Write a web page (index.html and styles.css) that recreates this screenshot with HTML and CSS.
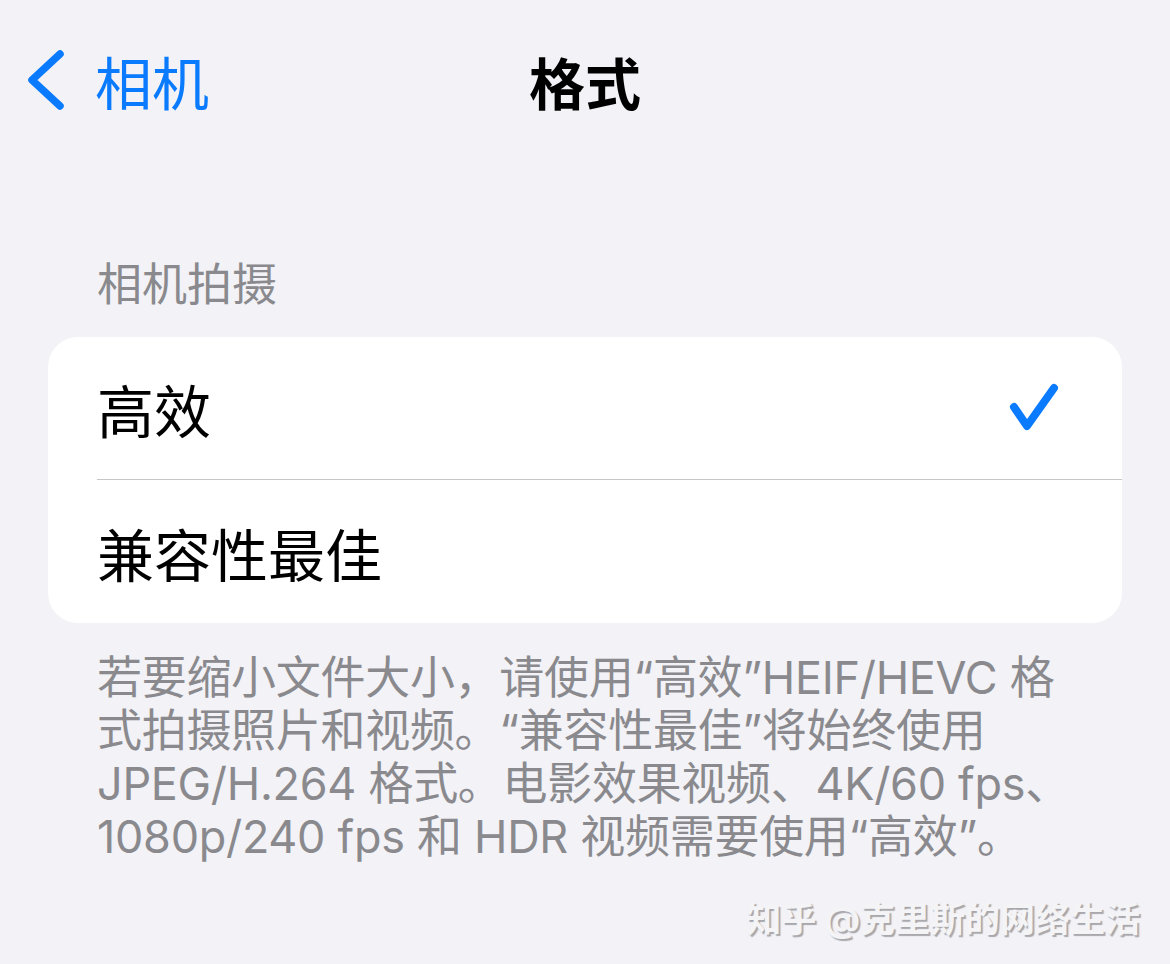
FILE: index.html
```html
<!DOCTYPE html>
<html lang="zh-CN">
  <head>
    <meta charset="UTF-8" />
    <meta name="viewport" content="width=device-width, initial-scale=1.0" />
    <title>格式</title>
    <link rel="stylesheet" href="styles.css">
  </head>
  <body>
    <div class="nav">
      <a class="back" href="#">
        <svg class="chevron" width="40" height="64" viewBox="0 0 40 64">
          <path d="M34 6 L6 32 L34 58" fill="none" stroke="#0a7aff" stroke-width="7.5" stroke-linecap="round" stroke-linejoin="round" />
        </svg>
        <span>相机</span>
      </a>
      <h1 class="title">格式</h1>
      <div></div>
    </div>

    <p class="section-header">相机拍摄</p>
    <div class="card">
      <div class="row">
        <span>高效</span>
        <svg class="check" width="52" height="52" viewBox="0 0 52 52">
          <path d="M6 25 L19 44 L46 6" fill="none" stroke="#0a7aff" stroke-width="8" stroke-linecap="round" stroke-linejoin="round" />
        </svg>
      </div>
      <div class="row">
        <span>兼容性最佳</span>
      </div>
    </div>
    <p class="footer">
      若要缩小文件大小，请使用“高效”HEIF/HEVC 格<br />式拍摄照片和视频。“兼容性最佳”将始终使用<br />JPEG/H.264 格式。电影效果视频、4K/60 fps、<br />1080p/240 fps 和 HDR 视频需要使用“高效”。
    </p>
    <div class="watermark">知乎 @克里斯的网络生活</div>
  </body>
</html>
```

FILE: styles.css
```css
body {
  margin: 0;
  background-color: #f2f2f7;
  font-family: Inter, "Noto Sans CJK SC", sans-serif;
  color: #000;
}
.nav {
  display: grid;
  grid-template-columns: 1fr auto 1fr;
  align-items: center;
  height: 160px;
}
.back {
  display: flex;
  align-items: center;
  gap: 29px;
  padding-left: 26px;
  color: #0a7aff;
  text-decoration: none;
  font-size: 57px;
}
.chevron {
  display: block;
}
.title {
  margin: 0;
  font-size: 56px;
  font-weight: 700;
}
.section-header {
  margin: 98px 0 25px;
  padding-left: 97px;
  font-size: 45px;
  line-height: 54px;
  color: #8a8a8e;
}
.card {
  margin: 0 48px;
  background-color: #fff;
  border-radius: 30px;
}
.row {
  display: flex;
  align-items: center;
  justify-content: space-between;
  height: 142px;
  margin-left: 49px;
  padding-right: 62px;
  font-size: 57px;
}
.row + .row {
  border-top: 1px solid #c6c6c8;
  height: 143px;
}
.check {
  display: block;
}
.footer {
  margin: 28px 0 0;
  padding-left: 97px;
  font-size: 45px;
  line-height: 53px;
  letter-spacing: -0.3px;
  color: #8a8a8e;
}
.watermark {
  margin-top: 28px;
  padding-right: 30px;
  text-align: right;
  font-size: 35px;
  font-weight: 700;
  color: #f4f4f6;
  text-shadow: 2px 2px 1px #a8a8ac;
}
```
